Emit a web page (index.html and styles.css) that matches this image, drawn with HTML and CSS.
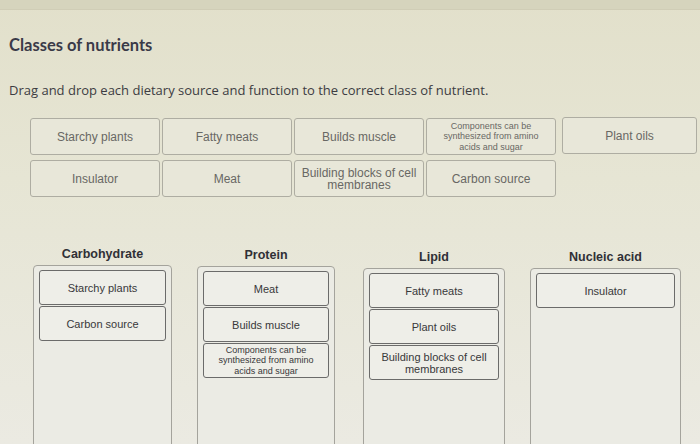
FILE: index.html
```html
<!DOCTYPE html>
<html lang="en">
<head>
    <meta charset="UTF-8">
    <meta name="viewport" content="width=device-width, initial-scale=1.0">
    <title>Classes of nutrients</title>
    <link rel="stylesheet" href="styles.css">
</head>
<body>
    <div class="topbar"></div>

    <main class="page">
        <h1>Classes of nutrients</h1>
        <p class="prompt">Drag and drop each dietary source and function to the correct class of nutrient.</p>

        <div class="bank">
            <div class="tile">Starchy plants</div>
            <div class="tile">Fatty meats</div>
            <div class="tile">Builds muscle</div>
            <div class="tile small">Components can be synthesized from amino acids and sugar</div>
            <div class="tile last">Plant oils</div>
            <div class="tile">Insulator</div>
            <div class="tile">Meat</div>
            <div class="tile">Building blocks of cell membranes</div>
            <div class="tile">Carbon source</div>
        </div>

        <div class="classes">
            <section class="group carb">
                <h2>Carbohydrate</h2>
                <div class="zone">
                    <div class="chip">Starchy plants</div>
                    <div class="chip">Carbon source</div>
                </div>
            </section>
            <section class="group protein">
                <h2>Protein</h2>
                <div class="zone">
                    <div class="chip">Meat</div>
                    <div class="chip">Builds muscle</div>
                    <div class="chip small">Components can be synthesized from amino acids and sugar</div>
                </div>
            </section>
            <section class="group lipid">
                <h2>Lipid</h2>
                <div class="zone">
                    <div class="chip">Fatty meats</div>
                    <div class="chip">Plant oils</div>
                    <div class="chip">Building blocks of cell membranes</div>
                </div>
            </section>
            <section class="group nucleic">
                <h2>Nucleic acid</h2>
                <div class="zone">
                    <div class="chip">Insulator</div>
                </div>
            </section>
        </div>
    </main>
</body>
</html>
```

FILE: styles.css
```css
* {
    box-sizing: border-box;
}

html, body {
    height: 100%;
}

body {
    margin: 0;
    overflow: hidden;
    background: linear-gradient(180deg, #e2e0cb 0%, #e6e5d4 40%, #ebeae2 100%);
    font-family: 'Liberation Sans', Arial, sans-serif;
    color: #3a3a40;
}

.topbar {
    height: 10px;
    background: #d6d4bd;
    border-bottom: 1px solid #d0cdb6;
}

.page {
    padding: 0 0 0 9px;
}

h1 {
    margin: 25px 0 0;
    font-family: 'Lato', sans-serif;
    font-size: 16.5px;
    font-weight: 700;
    color: #3a3a48;
    line-height: 20px;
}

.prompt {
    margin: 26px 0 0;
    font-family: 'Open Sans', sans-serif;
    font-size: 13px;
    line-height: 18px;
    color: #3c3c42;
}

/* answer bank */
.bank {
    display: flex;
    flex-wrap: wrap;
    gap: 5px 2px;
    margin: 19px 0 0 21px;
    width: 672px;
}

.tile {
    width: 130px;
    height: 37px;
    display: flex;
    align-items: center;
    justify-content: center;
    text-align: center;
    padding: 0 3px;
    border: 1.5px solid #aeada2;
    border-radius: 3px;
    font-size: 12px;
    line-height: 12px;
    color: #686864;
    background: #e8e7d9;
}

.tile.last {
    margin-left: 4px;
    width: 135px;
    margin-top: -1px;
}

.tile.small,
.chip.small {
    padding: 0 14px;
    font-size: 9px;
    line-height: 10.5px;
}

/* class columns */
.classes {
    display: flex;
    gap: 25px;
    margin: 50px 0 0 24px;
}

.carb { width: 139px; }
.protein { width: 138px; margin-top: 1px; }
.lipid { width: 142px; margin-top: 3px; margin-left: 3px; }
.nucleic { width: 151px; margin-top: 3px; }

h2 {
    margin: 0 0 3px;
    text-align: center;
    font-size: 12.5px;
    font-weight: 700;
    line-height: 15px;
    color: #303036;
}

.zone {
    height: 190px;
    padding: 4px 5px;
    border: 1px solid #a4a39c;
    border-radius: 4px;
    background: #ebebe4;
}

.chip {
    height: 35px;
    margin-bottom: 1px;
    display: flex;
    align-items: center;
    justify-content: center;
    text-align: center;
    padding: 0 4px;
    border: 1.5px solid #6b6b6a;
    border-radius: 3px;
    font-size: 11px;
    line-height: 12px;
    color: #38383a;
    background: #eeeee8;
}
```
